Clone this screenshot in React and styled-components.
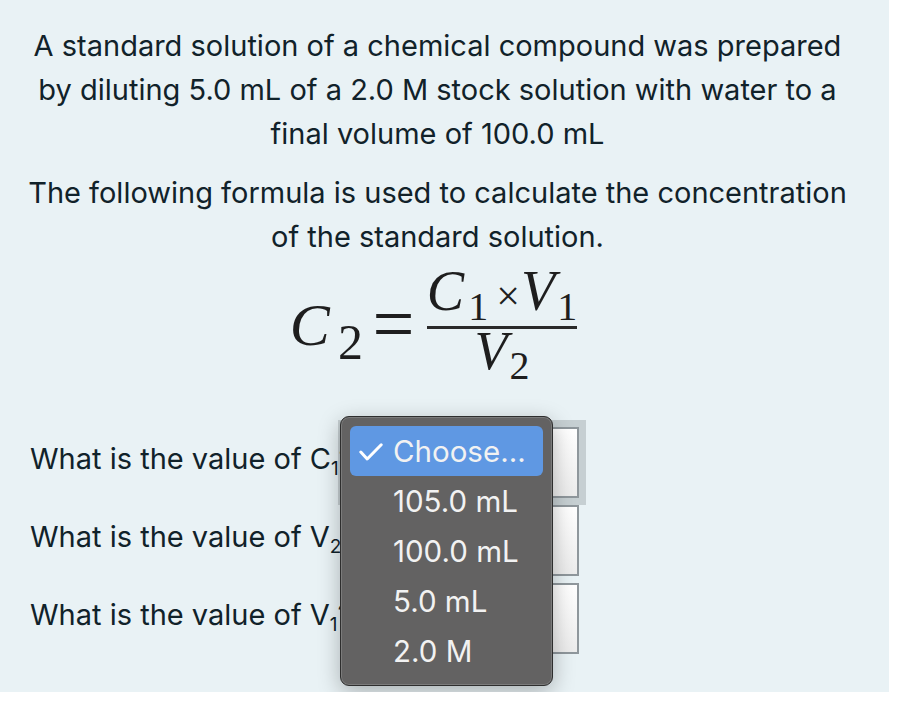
import React from "react";
import styled, { createGlobalStyle } from "styled-components";

const Global = createGlobalStyle`
  html, body { margin: 0; padding: 0; background: #ffffff; }
  body { font-family: Inter, "Noto Sans", "Liberation Sans", sans-serif; }
`;

const Panel = styled.div`
  position: relative;
  width: 889px;
  height: 692px;
  box-sizing: border-box;
  background: #e9f2f5;
  padding: 24px 14px 0 0;
  color: #11222a;
`;

const Para = styled.p`
  margin: 0 0 15px;
  text-align: center;
  font-size: 29px;
  line-height: 44px;
`;

const Formula = styled.div`
  display: flex;
  justify-content: center;
  align-items: flex-start;
  margin: -11px 8px 0 0;
  height: 114px;
  font-family: "Liberation Serif", "DejaVu Serif", serif;
  color: #1e1e1e;
`;

const Group = styled.span`
  display: inline-flex;
  align-items: baseline;
  margin-top: ${(p) => p.top || 0}px;
  line-height: 1;
`;

const MathI = styled.span`
  font-style: italic;
  font-size: ${(p) => p.size}px;
  line-height: ${(p) => p.lh || 1};
`;

const Digit = styled.span`
  font-size: ${(p) => p.size}px;
  position: relative;
  top: ${(p) => p.drop}px;
  margin-left: ${(p) => p.gap}px;
  line-height: 1;
`;

const Eq = styled.span`
  display: inline-block;
  font-size: 62px;
  line-height: 1;
  margin: 30px 16px 0 13px;
  transform: scale(1.2, 1.3);
`;

const Frac = styled.span`
  display: inline-flex;
  flex-direction: column;
  align-items: center;
`;

const Num = styled.span`
  display: inline-flex;
  align-items: baseline;
  padding: 0 0 7px;
  border-bottom: 3px solid #2a2a2a;
  line-height: 1;
  white-space: nowrap;
`;

const Den = styled.span`
  display: inline-flex;
  align-items: baseline;
  line-height: 0.8;
  padding-top: 1px;
  white-space: nowrap;
`;

const Times = styled.span`
  font-size: 42px;
  margin: 0 1px 0 8px;
`;

const Rows = styled.div`
  margin-top: 50px;
  display: flex;
  flex-direction: column;
  gap: 7px;
  padding-left: 30px;
`;

const Row = styled.div`
  display: flex;
  align-items: center;
  height: 71px;
`;

const Label = styled.span`
  flex: 0 0 315px;
  min-width: 0;
  font-size: 29px;
  white-space: nowrap;
  position: relative;
  top: -4px;
`;

const LSub = styled.sub`
  font-size: 19px;
  line-height: 0;
  vertical-align: -6px;
`;

const Select = styled.div`
  flex: 0 0 234px;
  height: 71px;
  box-sizing: border-box;
  border: 2px solid #8f979c;
  background: linear-gradient(#ffffff, #ececec);
  outline: ${(p) => (p.focused ? "7px solid #c6cfd2" : "none")};
`;

const Menu = styled.div`
  position: absolute;
  left: 340px;
  top: 416px;
  width: 213px;
  height: 270px;
  box-sizing: border-box;
  background: #636262;
  border: 1px solid #2e2e2e;
  box-shadow: inset 0 0 0 1px #7b7b7b, 0 6px 22px rgba(0, 0, 0, 0.28);
  border-radius: 9px;
  padding: 9px;
  display: flex;
  flex-direction: column;
`;

const Item = styled.div`
  height: 50px;
  display: flex;
  align-items: center;
  border-radius: 6px;
  background: ${(p) => (p.active ? "#5f98e3" : "transparent")};
  color: #f2f2f2;
  font-size: 29.5px;
`;

const Check = styled.span`
  flex: 0 0 43px;
  display: flex;
  justify-content: flex-end;
  padding-right: 10px;
  box-sizing: border-box;
  position: relative;
  top: 1px;
`;

const CheckIcon = () => (
  <svg width="24" height="18" viewBox="0 0 24 18" aria-hidden="true">
    <polyline
      points="1.8,9 8.2,16 22.2,1.8"
      fill="none"
      stroke="#ffffff"
      strokeWidth="3"
      strokeLinecap="round"
      strokeLinejoin="round"
    />
  </svg>
);

const options = ["105.0 mL", "100.0 mL", "5.0 mL", "2.0 M"];

export default function App() {
  return (
    <>
      <Global />
      <Panel>
        <Para>
          A standard solution of a chemical compound was prepared
          <br />
          by diluting 5.0 mL of a 2.0 M stock solution with water to a
          <br />
          final volume of 100.0 mL
        </Para>
        <Para>
          The following formula is used to calculate the concentration
          <br />
          of the standard solution.
        </Para>
        <Formula>
          <Group top={32}>
            <MathI size={60}>C</MathI>
            <Digit size={50} drop={14} gap={8}>2</Digit>
          </Group>
          <Eq>=</Eq>
          <Frac>
            <Num>
              <MathI size={56}>C</MathI>
              <Digit size={40} drop={10} gap={4}>1</Digit>
              <Times>×</Times>
              <MathI size={56}>V</MathI>
              <Digit size={40} drop={10} gap={2}>1</Digit>
            </Num>
            <Den>
              <MathI size={54} lh={0.8}>V</MathI>
              <Digit size={40} drop={10} gap={2}>2</Digit>
            </Den>
          </Frac>
        </Formula>
        <Rows>
          <Row>
            <Label>
              What is the value of C<LSub>1</LSub>?
            </Label>
            <Select focused />
          </Row>
          <Row>
            <Label>
              What is the value of V<LSub>2</LSub>?
            </Label>
            <Select />
          </Row>
          <Row>
            <Label>
              What is the value of V<LSub>1</LSub>?
            </Label>
            <Select />
          </Row>
        </Rows>
        <Menu>
          <Item active>
            <Check>
              <CheckIcon />
            </Check>
            Choose...
          </Item>
          {options.map((o) => (
            <Item key={o}>
              <Check />
              {o}
            </Item>
          ))}
        </Menu>
      </Panel>
    </>
  );
}
